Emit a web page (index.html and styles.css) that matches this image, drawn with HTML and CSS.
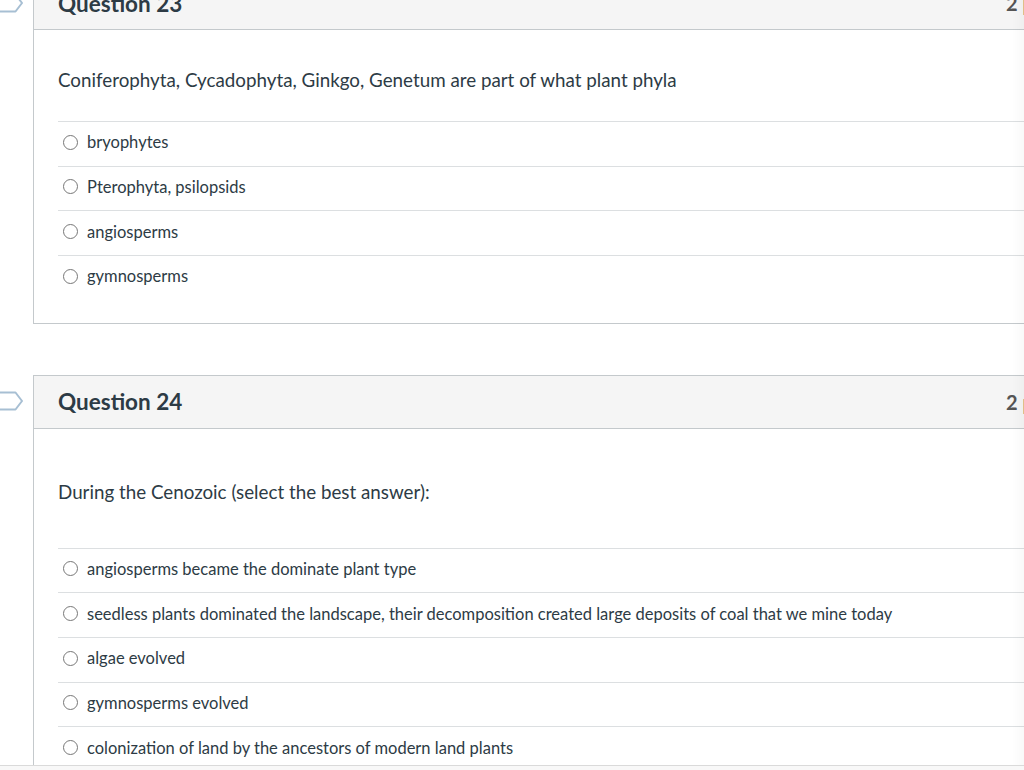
FILE: index.html
```html
<!DOCTYPE html>
<html lang="en">
<head>
<meta charset="utf-8">
<title>Quiz</title>
<link rel="stylesheet" href="styles.css">
</head>
<body>
<main class="quiz">
  <section class="question-row question-row--first">
    <div class="flag">
      <svg class="flag-icon" width="24" height="20" viewBox="0 0 24 20" aria-hidden="true"><path d="M-3 1.5 H15.5 L22 10 L15.5 18.5 H-3" fill="#fff" stroke="#a7bfd3" stroke-width="2" stroke-linejoin="round"/></svg>
    </div>
    <div class="card">
      <header class="card-header">
        <h2 class="card-title">Question 23</h2>
        <span class="points">2 pts</span>
      </header>
      <div class="card-body">
        <div class="qtext">Coniferophyta, Cycadophyta, Ginkgo, Genetum are part of what plant phyla</div>
        <ul class="answers">
          <li class="answer"><span class="radio"></span>bryophytes</li>
          <li class="answer"><span class="radio"></span>Pterophyta, psilopsids</li>
          <li class="answer"><span class="radio"></span>angiosperms</li>
          <li class="answer"><span class="radio"></span>gymnosperms</li>
        </ul>
      </div>
    </div>
  </section>

  <section class="question-row">
    <div class="flag">
      <svg class="flag-icon" width="24" height="20" viewBox="0 0 24 20" aria-hidden="true"><path d="M-3 1.5 H15.5 L22 10 L15.5 18.5 H-3" fill="#fff" stroke="#a7bfd3" stroke-width="2" stroke-linejoin="round"/></svg>
    </div>
    <div class="card">
      <header class="card-header">
        <h2 class="card-title">Question 24</h2>
        <span class="points">2 pts</span>
      </header>
      <div class="card-body">
        <div class="qtext qtext--spaced">During the Cenozoic (select the best answer):</div>
        <ul class="answers">
          <li class="answer"><span class="radio"></span>angiosperms became the dominate plant type</li>
          <li class="answer"><span class="radio"></span>seedless plants dominated the landscape, their decomposition created large deposits of coal that we mine today</li>
          <li class="answer"><span class="radio"></span>algae evolved</li>
          <li class="answer"><span class="radio"></span>gymnosperms evolved</li>
          <li class="answer"><span class="radio"></span>colonization of land by the ancestors of modern land plants</li>
        </ul>
      </div>
    </div>
  </section>
</main>
<div class="right-shade"></div>
<div class="bottom-edge"></div>
</body>
</html>
```

FILE: styles.css
```css
html, body {
  margin: 0;
  padding: 0;
  background: #fff;
  overflow: hidden;
  height: 770px;
}

body {
  font-family: Lato, "Open Sans", sans-serif;
  color: #2d3b45;
}

.quiz {
  margin-top: -24px;
  display: flex;
  flex-direction: column;
  gap: 51px;
  width: 1100px;
}

.question-row {
  display: flex;
  align-items: flex-start;
}

.flag {
  width: 33px;
  height: 54px;
  flex: none;
  display: flex;
  align-items: center;
}

.flag-icon {
  display: block;
  margin-top: -1px;
}

.card {
  width: 1042px;
  border: 1px solid #c4c9cc;
  box-sizing: border-box;
}

.card-header {
  height: 53px;
  box-sizing: border-box;
  background: #f5f5f5;
  border-bottom: 1px solid #c4c9cc;
  padding: 0 24px;
  display: flex;
  align-items: center;
  justify-content: space-between;
}

.card-title {
  margin: 0;
  font-size: 22.5px;
  font-weight: 700;
  color: #2d3b45;
}

.points {
  font-size: 20px;
  font-weight: 700;
  color: #555;
}

.card-body {
  padding: 36px 24px 23px;
}

.qtext {
  font-size: 18.8px;
  line-height: 27px;
  margin-bottom: 28px;
}

.qtext--spaced {
  margin-top: 13px;
  margin-bottom: 43px;
}

.answers {
  list-style: none;
  margin: 0;
  padding: 0;
}

.answer {
  height: 44.67px;
  box-sizing: border-box;
  border-top: 1px solid #dcdfe1;
  display: flex;
  align-items: center;
  font-size: 16.5px;
  padding-left: 5px;
  padding-bottom: 3px;
}

.radio {
  width: 13px;
  height: 13px;
  border: 1px solid #777;
  border-radius: 50%;
  flex: none;
  margin-right: 9px;
  box-sizing: content-box;
}

.right-shade {
  position: fixed;
  top: 0;
  bottom: 0;
  right: 0;
  width: 12px;
  background: linear-gradient(to right, rgba(0, 0, 0, 0), rgba(0, 0, 0, 0.025));
  pointer-events: none;
}

.bottom-edge {
  position: fixed;
  left: 0;
  right: 0;
  bottom: 0;
  height: 4px;
  border-top: 1px solid #dadada;
  background: #f8f8f8;
}
```
